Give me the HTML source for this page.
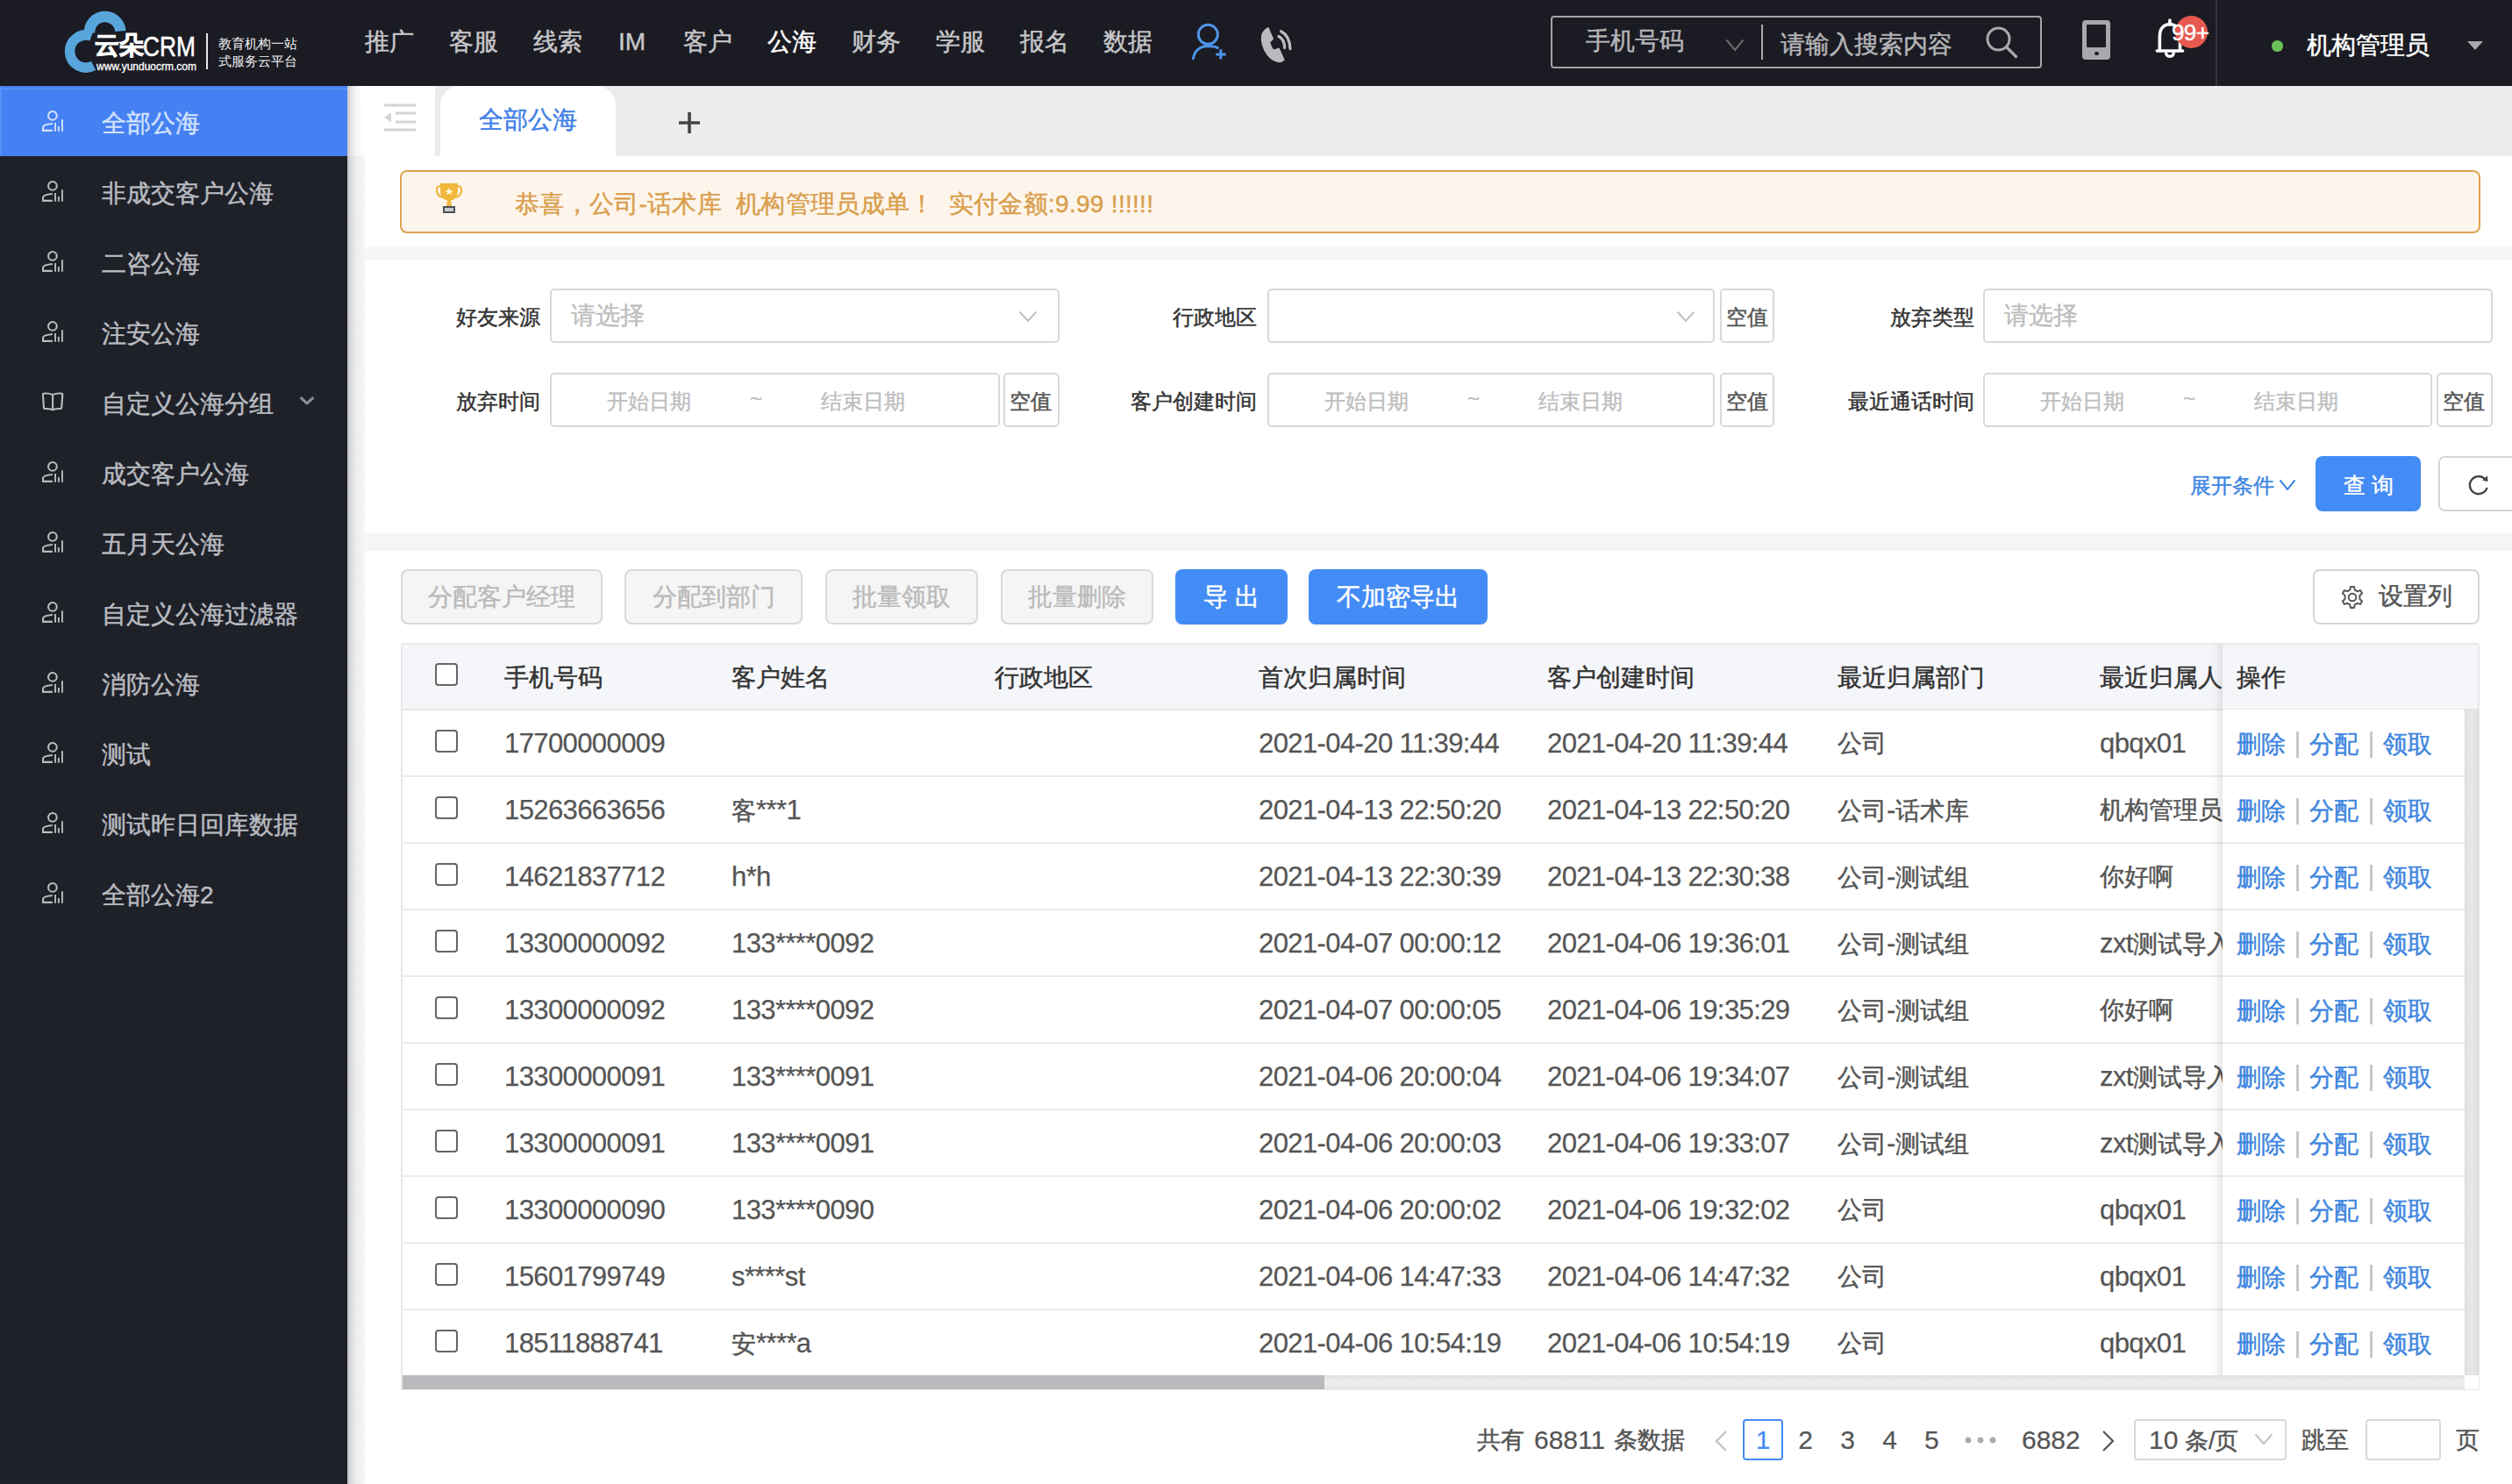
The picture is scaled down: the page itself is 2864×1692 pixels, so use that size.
<!DOCTYPE html>
<html><head><meta charset="utf-8">
<style>
*{box-sizing:border-box;margin:0;padding:0}
html,body{width:2864px;height:1692px;overflow:hidden}
body{position:relative;background:#f5f5f5;font-family:"Liberation Sans",sans-serif;color:#333;-webkit-text-stroke:0.45px currentColor}
.a{position:absolute}
#hdr{left:0;top:0;width:2864px;height:98px;background:#1b1b23}
#side{left:0;top:98px;width:396px;height:1594px;background:#1f2129}
.nav{position:absolute;top:24px;font-size:28px;line-height:48px;color:#c6c6c8;white-space:nowrap}
.si{position:absolute;left:0;width:396px;height:80px;color:#b9bbc0;font-size:28px}
.si .t{position:absolute;left:116px;top:23px;line-height:40px;white-space:nowrap}
.si svg{position:absolute;left:47px;top:27px}
.si.act{background:#4681f3;color:#d3e2fc}
.inp{border:2px solid #d9d9d9;border-radius:5px;background:#fff}
.lbl{font-size:24px;line-height:44px;color:#333;white-space:nowrap}
.ph{font-size:28px;line-height:40px;color:#bfbfbf;white-space:nowrap}
.dph{font-size:24px;line-height:44px;color:#bfbfbf;white-space:nowrap}
.kz{font-size:24px;line-height:44px;color:#555;white-space:nowrap}
.btnb{background:#448cf5;color:#fff;border-radius:8px;font-size:28px;display:flex;align-items:center;justify-content:center;white-space:nowrap;box-shadow:0 2px 2px rgba(0,0,0,0.04)}
.btnd{background:#f5f5f5;color:#bbb;border:2px solid #d9d9d9;border-radius:8px;font-size:28px;display:flex;align-items:center;justify-content:center;white-space:nowrap}
.cb{width:26px;height:26px;border:2px solid #666;border-radius:4px;background:#fff}
.th{font-size:28px;line-height:44px;color:#333;white-space:nowrap}
.td{font-size:28px;line-height:43px;color:#555;white-space:nowrap}
.td .n{font-size:31px;letter-spacing:-0.6px;position:relative;top:0;-webkit-text-stroke:0.25px currentColor}
.lk{font-size:28px;line-height:44px;color:#3f86e0;white-space:nowrap}
.sep{width:3px;height:30px;background:#c8c8c8}
.pg{font-size:27px;line-height:40px;color:#555;white-space:nowrap}
.n2{font-size:30px;-webkit-text-stroke:0.2px currentColor}
</style></head><body>
<!-- HEADER -->
<div id="hdr" class="a">
  <!-- logo -->
  <svg class="a" style="left:60px;top:0" width="100" height="98" viewBox="0 0 100 98">
    <path d="M46.6 74.9 A18.5 18.5 0 1 1 44.3 41.1" fill="none" stroke="#58a5dc" stroke-width="11.5"/>
    <path d="M42 38 A17.7 17.7 0 0 1 77.4 35.5" fill="none" stroke="#58a5dc" stroke-width="12.5"/>
  </svg>
  <div class="a" style="left:108px;top:36px;font-size:28px;font-weight:bold;color:#fff;line-height:32px;white-space:nowrap;-webkit-text-stroke:0.9px #fff">云朵</div>
  <div class="a" style="left:163px;top:34px;font-size:32px;color:#fff;line-height:38px;white-space:nowrap;transform:scaleX(0.82);transform-origin:0 0;-webkit-text-stroke:0.6px #fff">CRM</div>
  <div class="a" style="left:110px;top:68px;font-size:12px;color:#fff;line-height:16px;white-space:nowrap;-webkit-text-stroke:0.3px #fff">www.yunduocrm.com</div>
  <div class="a" style="left:235px;top:38px;width:2px;height:41px;background:#e8e8e8"></div>
  <div class="a" style="left:249px;top:40px;font-size:15px;color:#eee;line-height:19.5px;white-space:nowrap;-webkit-text-stroke:0">教育机构一站<br>式服务云平台</div>

  <div class="nav" style="left:416px">推广</div>
  <div class="nav" style="left:512px">客服</div>
  <div class="nav" style="left:608px">线索</div>
  <div class="nav" style="left:705px">IM</div>
  <div class="nav" style="left:779px">客户</div>
  <div class="nav" style="left:875px;color:#fff">公海</div>
  <div class="nav" style="left:971px">财务</div>
  <div class="nav" style="left:1067px">学服</div>
  <div class="nav" style="left:1163px">报名</div>
  <div class="nav" style="left:1258px">数据</div>
  <!-- user add icon -->
  <svg class="a" style="left:1355px;top:24px" width="48" height="48" viewBox="0 0 48 48"><circle cx="22.3" cy="15.3" r="11" fill="none" stroke="#4f94eb" stroke-width="3"/><path d="M5.4 42.7 Q8 29 22 28.5 Q30 28.6 33.4 30.6" fill="none" stroke="#4f94eb" stroke-width="3" stroke-linecap="round"/><path d="M36.9 32.2 V43.6 M31.2 37.9 H42.6" stroke="#4f94eb" stroke-width="3"/></svg>
  <!-- phone icon -->
  <svg class="a" style="left:1430px;top:24px" width="50" height="50" viewBox="0 0 50 50"><path d="M16.4 7 L22.1 20.4 L18.3 24.2 Q19.5 29 22.1 32.5 L28.5 30.6 L34.8 44.6 Q31 48 26.6 47.1 Q17 44.5 11.5 34 Q6.5 24 8.3 15.5 Q10.5 9 16.4 7 Z" fill="#b9babf"/><path d="M28 17.5 Q34.5 21 34.6 30.4" fill="none" stroke="#b9babf" stroke-width="3.3" stroke-linecap="round"/><path d="M30.6 11.8 Q40.5 17 41 31.6" fill="none" stroke="#b9babf" stroke-width="3.3" stroke-linecap="round"/></svg>
  <!-- search -->
  <div class="a" style="left:1768px;top:18px;width:560px;height:60px;border:2px solid #a4a5aa;border-radius:4px"></div>
  <div class="a" style="left:1808px;top:27px;font-size:28px;line-height:40px;color:#b4b4b7;white-space:nowrap">手机号码</div>
  <svg class="a" style="left:1967px;top:44px" width="22" height="15" viewBox="0 0 22 15"><path d="M1.5 1.5 L11 13 L20.5 1.5" fill="none" stroke="#6d6e74" stroke-width="2"/></svg>
  <div class="a" style="left:2008px;top:28px;width:2px;height:40px;background:#a9aaaf"></div>
  <div class="a" style="left:2030px;top:31px;font-size:28px;line-height:40px;color:#b4b4b7;white-space:nowrap">请输入搜索内容</div>
  <svg class="a" style="left:2263px;top:29px" width="40" height="40" viewBox="0 0 40 40"><circle cx="15.5" cy="15.5" r="12.5" fill="none" stroke="#a9aaaf" stroke-width="3"/><path d="M24.5 24.5 L36.5 36.5" stroke="#a9aaaf" stroke-width="3.2"/></svg>
  <!-- tablet -->
  <div class="a" style="left:2374px;top:23px;width:32px;height:45px;background:#a7a8ad;border-radius:4px"></div>
  <div class="a" style="left:2379px;top:28px;width:22px;height:26px;background:#1b1b23;border-radius:1px"></div>
  <div class="a" style="left:2388px;top:58.5px;width:4.5px;height:4.5px;background:#1b1b23;border-radius:50%"></div>
  <!-- bell -->
  <svg class="a" style="left:2455px;top:20px" width="40" height="48" viewBox="0 0 40 48"><path d="M4.3 38 H33.5" stroke="#fff" stroke-width="3.6" stroke-linecap="round"/><path d="M7.3 38 V22 Q7.3 8.5 18.9 7.5 Q30.5 8.5 30.5 22 V38" fill="none" stroke="#fff" stroke-width="3.6"/><path d="M18.9 3 V8" stroke="#fff" stroke-width="3.6" stroke-linecap="round"/><path d="M14.5 39.5 Q14.5 44.3 18.9 44.3 Q23.3 44.3 23.3 39.5" fill="none" stroke="#fff" stroke-width="3.4"/></svg>
  <div class="a" style="left:2480px;top:18px;width:37px;height:37px;background:#e8584f;border-radius:50%"></div>
  <div class="a" style="left:2476px;top:20px;font-size:26px;line-height:34px;color:#fff;white-space:nowrap;letter-spacing:-0.6px">99+</div>
  <div class="a" style="left:2526px;top:0;width:2px;height:98px;background:#34353d"></div>
  <div class="a" style="left:2590px;top:46px;width:12.5px;height:12.5px;background:#6cc15a;border-radius:50%"></div>
  <div class="a" style="left:2630px;top:32px;font-size:28px;line-height:40px;color:#fff;white-space:nowrap;font-weight:500">机构管理员</div>
  <svg class="a" style="left:2813px;top:47px" width="18" height="10" viewBox="0 0 18 10"><path d="M0 0 H18 L9 10 Z" fill="#a8a9ae"/></svg>
</div>

<!-- SIDEBAR -->
<div id="side" class="a">
<div class="si act" style="top:0px"><div style="position:absolute;left:0;top:2px;width:396px;height:2px;background:#5590f6"></div><div style="position:absolute;left:0;top:0;width:2px;height:80px;background:#4f93f8"></div><svg width="28" height="28" viewBox="0 0 28 28" fill="none" stroke="currentColor" stroke-width="2.1"><circle cx="12.9" cy="6.9" r="4.85"/><path d="M12.9 16 C7 16.5 2.05 17.5 2.05 20 V23.9 H12.9"/><path d="M16 15.1 V24.8 M19.9 19.1 V24.8 M23.95 11.2 V24.8" stroke-width="1.9"/></svg><div class="t">全部公海</div></div>
<div class="si" style="top:80px"><svg width="28" height="28" viewBox="0 0 28 28" fill="none" stroke="currentColor" stroke-width="2.1"><circle cx="12.9" cy="6.9" r="4.85"/><path d="M12.9 16 C7 16.5 2.05 17.5 2.05 20 V23.9 H12.9"/><path d="M16 15.1 V24.8 M19.9 19.1 V24.8 M23.95 11.2 V24.8" stroke-width="1.9"/></svg><div class="t">非成交客户公海</div></div>
<div class="si" style="top:160px"><svg width="28" height="28" viewBox="0 0 28 28" fill="none" stroke="currentColor" stroke-width="2.1"><circle cx="12.9" cy="6.9" r="4.85"/><path d="M12.9 16 C7 16.5 2.05 17.5 2.05 20 V23.9 H12.9"/><path d="M16 15.1 V24.8 M19.9 19.1 V24.8 M23.95 11.2 V24.8" stroke-width="1.9"/></svg><div class="t">二咨公海</div></div>
<div class="si" style="top:240px"><svg width="28" height="28" viewBox="0 0 28 28" fill="none" stroke="currentColor" stroke-width="2.1"><circle cx="12.9" cy="6.9" r="4.85"/><path d="M12.9 16 C7 16.5 2.05 17.5 2.05 20 V23.9 H12.9"/><path d="M16 15.1 V24.8 M19.9 19.1 V24.8 M23.95 11.2 V24.8" stroke-width="1.9"/></svg><div class="t">注安公海</div></div>
<div class="si" style="top:320px"><svg width="28" height="28" viewBox="0 0 28 28" fill="none" stroke="currentColor" stroke-width="2.1" stroke-linejoin="round"><path d="M13.1 5 Q8 3 2.6 3.7 Q1.9 3.8 1.9 4.6 L3 20 Q3.1 21 4 21 Q9 20.8 13.1 22.2 Q17.2 20.8 22.2 21 Q23.1 21 23.2 20 L24.3 4.6 Q24.3 3.8 23.6 3.7 Q18.2 3 13.1 5 Z M13.1 5 V22.2"/></svg><div class="t">自定义公海分组</div><svg class="chev" width="20" height="14" viewBox="0 0 20 14" style="position:absolute;left:339px;top:33px"><path d="M4.6 3 L10.9 8.9 L17.5 3" fill="none" stroke="#8b8d94" stroke-width="3.1" stroke-linecap="round" stroke-linejoin="round"/></svg></div>
<div class="si" style="top:400px"><svg width="28" height="28" viewBox="0 0 28 28" fill="none" stroke="currentColor" stroke-width="2.1"><circle cx="12.9" cy="6.9" r="4.85"/><path d="M12.9 16 C7 16.5 2.05 17.5 2.05 20 V23.9 H12.9"/><path d="M16 15.1 V24.8 M19.9 19.1 V24.8 M23.95 11.2 V24.8" stroke-width="1.9"/></svg><div class="t">成交客户公海</div></div>
<div class="si" style="top:480px"><svg width="28" height="28" viewBox="0 0 28 28" fill="none" stroke="currentColor" stroke-width="2.1"><circle cx="12.9" cy="6.9" r="4.85"/><path d="M12.9 16 C7 16.5 2.05 17.5 2.05 20 V23.9 H12.9"/><path d="M16 15.1 V24.8 M19.9 19.1 V24.8 M23.95 11.2 V24.8" stroke-width="1.9"/></svg><div class="t">五月天公海</div></div>
<div class="si" style="top:560px"><svg width="28" height="28" viewBox="0 0 28 28" fill="none" stroke="currentColor" stroke-width="2.1"><circle cx="12.9" cy="6.9" r="4.85"/><path d="M12.9 16 C7 16.5 2.05 17.5 2.05 20 V23.9 H12.9"/><path d="M16 15.1 V24.8 M19.9 19.1 V24.8 M23.95 11.2 V24.8" stroke-width="1.9"/></svg><div class="t">自定义公海过滤器</div></div>
<div class="si" style="top:640px"><svg width="28" height="28" viewBox="0 0 28 28" fill="none" stroke="currentColor" stroke-width="2.1"><circle cx="12.9" cy="6.9" r="4.85"/><path d="M12.9 16 C7 16.5 2.05 17.5 2.05 20 V23.9 H12.9"/><path d="M16 15.1 V24.8 M19.9 19.1 V24.8 M23.95 11.2 V24.8" stroke-width="1.9"/></svg><div class="t">消防公海</div></div>
<div class="si" style="top:720px"><svg width="28" height="28" viewBox="0 0 28 28" fill="none" stroke="currentColor" stroke-width="2.1"><circle cx="12.9" cy="6.9" r="4.85"/><path d="M12.9 16 C7 16.5 2.05 17.5 2.05 20 V23.9 H12.9"/><path d="M16 15.1 V24.8 M19.9 19.1 V24.8 M23.95 11.2 V24.8" stroke-width="1.9"/></svg><div class="t">测试</div></div>
<div class="si" style="top:800px"><svg width="28" height="28" viewBox="0 0 28 28" fill="none" stroke="currentColor" stroke-width="2.1"><circle cx="12.9" cy="6.9" r="4.85"/><path d="M12.9 16 C7 16.5 2.05 17.5 2.05 20 V23.9 H12.9"/><path d="M16 15.1 V24.8 M19.9 19.1 V24.8 M23.95 11.2 V24.8" stroke-width="1.9"/></svg><div class="t">测试昨日回库数据</div></div>
<div class="si" style="top:880px"><svg width="28" height="28" viewBox="0 0 28 28" fill="none" stroke="currentColor" stroke-width="2.1"><circle cx="12.9" cy="6.9" r="4.85"/><path d="M12.9 16 C7 16.5 2.05 17.5 2.05 20 V23.9 H12.9"/><path d="M16 15.1 V24.8 M19.9 19.1 V24.8 M23.95 11.2 V24.8" stroke-width="1.9"/></svg><div class="t">全部公海2</div></div>
</div>

<!-- CONTENT -->
<div class="a" style="left:396px;top:98px;width:100px;height:80px;background:#fff"></div>
<div class="a" style="left:496px;top:98px;width:2368px;height:80px;background:#ececec"></div>
<div class="a" style="left:502px;top:98px;width:200px;height:82px;background:#fff;border-radius:22px 22px 0 0"></div>
<div class="a" style="left:546px;top:117px;font-size:28px;line-height:40px;color:#4080e8;white-space:nowrap">全部公海</div>
<svg class="a" style="left:438px;top:118px" width="36" height="32" viewBox="0 0 36 32"><path d="M0 2 H36 M13 11 H36 M13 21 H36 M0 30 H36" stroke="#d4d4d4" stroke-width="3.2"/><path d="M0 16 L8 10.5 V21.5 Z" fill="#d4d4d4"/></svg>
<svg class="a" style="left:774px;top:128px" width="24" height="24" viewBox="0 0 24 24"><path d="M12 0 V24 M0 12 H24" stroke="#444" stroke-width="3.6"/></svg>
<!-- white panel 1 -->
<div class="a" style="left:416px;top:178px;width:2448px;height:104px;background:#fff"></div>
<div class="a" style="left:456px;top:194px;width:2372px;height:72px;background:#fdf5eb;border:2px solid #dea352;border-radius:8px"></div>
<div class="a" style="left:587px;top:213px;font-size:28px;line-height:40px;color:#d99f4e;white-space:nowrap;letter-spacing:0.3px">恭喜，公司-话术库&nbsp;&nbsp;机构管理员成单！&nbsp;&nbsp;实付金额:9.99 !!!!!!</div>
<svg class="a" style="left:496px;top:208px" width="32" height="36" viewBox="0 0 32 36"><path d="M7 4 Q1 4 2 10 Q3 16 9 17" fill="none" stroke="#f0b53c" stroke-width="2.2"/><path d="M25 4 Q31 4 30 10 Q29 16 23 17" fill="none" stroke="#f0b53c" stroke-width="2.2"/><path d="M6 1 H26 V10 Q26 20 16 21 Q6 20 6 10 Z" fill="#f2b83e"/><path d="M14 20 H18 L19 27 H13 Z" fill="#f2b83e"/><rect x="9" y="27" width="14" height="8" fill="#4a4f55"/><rect x="11" y="29" width="10" height="4" fill="#c9cdd2"/><path d="M16 6 L17.3 9 L20.5 9.2 L18 11.2 L18.8 14.3 L16 12.6 L13.2 14.3 L14 11.2 L11.5 9.2 L14.7 9 Z" fill="#fff7d9"/></svg>
<!-- filter panel -->
<div class="a" style="left:416px;top:296px;width:2448px;height:312px;background:#fff"></div>
<!-- table panel -->
<div class="a" style="left:416px;top:628px;width:2448px;height:1064px;background:#fff"></div>
<div class="a lbl" style="right:2248px;top:340px">好友来源</div>
<div class="a inp" style="left:627px;top:329px;width:581px;height:62px;"></div>
<div class="a ph" style="left:651px;top:340px">请选择</div>
<svg class="a" style="left:1161px;top:354px" width="22" height="14" viewBox="0 0 22 14"><path d="M1.5 1.5 L11 12 L20.5 1.5" fill="none" stroke="#c0c0c0" stroke-width="2"/></svg>
<div class="a lbl" style="right:2248px;top:436px">放弃时间</div>
<div class="a inp" style="left:627px;top:425px;width:513px;height:62px;"></div>
<div class="a inp" style="left:1144px;top:425px;width:64px;height:62px;"></div>
<div class="a dph" style="left:692px;top:436px">开始日期</div><div class="a dph" style="left:855px;top:433px">~</div><div class="a dph" style="left:936px;top:436px">结束日期</div><div class="a kz" style="left:1151px;top:436px">空值</div>
<div class="a lbl" style="right:1431px;top:340px">行政地区</div>
<div class="a inp" style="left:1445px;top:329px;width:510px;height:62px;"></div>
<div class="a inp" style="left:1961px;top:329px;width:62px;height:62px;"></div>
<svg class="a" style="left:1911px;top:354px" width="22" height="14" viewBox="0 0 22 14"><path d="M1.5 1.5 L11 12 L20.5 1.5" fill="none" stroke="#c0c0c0" stroke-width="2"/></svg>
<div class="a kz" style="left:1968px;top:340px">空值</div>
<div class="a lbl" style="right:1431px;top:436px">客户创建时间</div>
<div class="a inp" style="left:1445px;top:425px;width:510px;height:62px;"></div>
<div class="a inp" style="left:1961px;top:425px;width:62px;height:62px;"></div>
<div class="a dph" style="left:1510px;top:436px">开始日期</div><div class="a dph" style="left:1673px;top:433px">~</div><div class="a dph" style="left:1754px;top:436px">结束日期</div><div class="a kz" style="left:1968px;top:436px">空值</div>
<div class="a lbl" style="right:613px;top:340px">放弃类型</div>
<div class="a inp" style="left:2261px;top:329px;width:581px;height:62px;"></div>
<div class="a ph" style="left:2285px;top:340px">请选择</div>
<div class="a lbl" style="right:613px;top:436px">最近通话时间</div>
<div class="a inp" style="left:2261px;top:425px;width:512px;height:62px;"></div>
<div class="a inp" style="left:2778px;top:425px;width:64px;height:62px;"></div>
<div class="a dph" style="left:2326px;top:436px">开始日期</div><div class="a dph" style="left:2489px;top:433px">~</div><div class="a dph" style="left:2570px;top:436px">结束日期</div><div class="a kz" style="left:2785px;top:436px">空值</div>
<div class="a" style="left:2497px;top:534px;font-size:24px;line-height:40px;color:#3f86e4;white-space:nowrap">展开条件</div>
<svg class="a" style="left:2598px;top:546px" width="20" height="14" viewBox="0 0 20 14"><path d="M1.5 1.5 L10 12 L18.5 1.5" fill="none" stroke="#3f86e4" stroke-width="2"/></svg>
<div class="a btnb" style="left:2640px;top:520px;width:120px;height:63px;font-size:25px;letter-spacing:7px;padding-left:7px;padding-top:3px">查询</div>
<div class="a" style="left:2780px;top:520px;width:120px;height:63px;border:2px solid #d6d6d6;border-radius:7px;background:#fff"></div>
<svg class="a" style="left:2813px;top:540px" width="26" height="26" viewBox="0 0 26 26"><path d="M21.5 8 A10 10 0 1 0 22.5 16" fill="none" stroke="#444" stroke-width="2.4"/><path d="M17 7.5 L23.5 9 L23 2.5 Z" fill="#444"/></svg>
<div class="a btnd" style="left:457px;top:649px;width:230px;height:63px">分配客户经理</div>
<div class="a btnd" style="left:712px;top:649px;width:203px;height:63px">分配到部门</div>
<div class="a btnd" style="left:941px;top:649px;width:174px;height:63px">批量领取</div>
<div class="a btnd" style="left:1141px;top:649px;width:174px;height:63px">批量删除</div>
<div class="a btnb" style="left:1340px;top:649px;width:128px;height:63px;letter-spacing:8px;padding-left:8px">导出</div>
<div class="a btnb" style="left:1492px;top:649px;width:204px;height:63px">不加密导出</div>
<div class="a" style="left:2637px;top:649px;width:190px;height:63px;border:2px solid #d6d6d6;border-radius:8px;background:#fff"></div>
<svg class="a" style="left:2668px;top:667px" width="28" height="28" viewBox="0 0 28 28"><path fill="none" stroke="#555" stroke-width="2" stroke-linejoin="round" d="M12 2 H16 L16.8 5.6 L19.6 7.2 L23.1 6.1 L25.1 9.6 L22.4 12.1 V15.9 L25.1 18.4 L23.1 21.9 L19.6 20.8 L16.8 22.4 L16 26 H12 L11.2 22.4 L8.4 20.8 L4.9 21.9 L2.9 18.4 L5.6 15.9 V12.1 L2.9 9.6 L4.9 6.1 L8.4 7.2 L11.2 5.6 Z"/><circle cx="14" cy="14" r="4.3" fill="none" stroke="#555" stroke-width="2"/></svg>
<div class="a" style="left:2712px;top:660px;font-size:28px;line-height:40px;color:#555;white-space:nowrap">设置列</div>
<div class="a" style="left:457px;top:733px;width:2370px;height:852px;border:2px solid #e8e8e8;border-radius:4px 4px 0 0;background:#fff"></div>
<div class="a" style="left:459px;top:735px;width:2366px;height:75px;background:#f5f6fa;border-bottom:2px solid #e6e6e6"></div>
<div class="a cb" style="left:496px;top:756px"></div>
<div class="a th" style="left:575px;top:751px">手机号码</div>
<div class="a th" style="left:834px;top:751px">客户姓名</div>
<div class="a th" style="left:1134px;top:751px">行政地区</div>
<div class="a th" style="left:1435px;top:751px">首次归属时间</div>
<div class="a th" style="left:1764px;top:751px">客户创建时间</div>
<div class="a th" style="left:2095px;top:751px">最近归属部门</div>
<div class="a th" style="left:2394px;top:751px">最近归属人</div>
<div class="a" style="left:459px;top:884px;width:2351px;height:2px;background:#ebebeb"></div>
<div class="a cb" style="left:496px;top:832px"></div>
<div class="a td" style="left:575px;top:826px"><span class="n">17700000009</span></div>
<div class="a td" style="left:1435px;top:826px"><span class="n">2021-04-20 11:39:44</span></div>
<div class="a td" style="left:1764px;top:826px"><span class="n">2021-04-20 11:39:44</span></div>
<div class="a td" style="left:2095px;top:826px">公司</div>
<div class="a td" style="left:2394px;top:826px"><span class="n">qbqx01</span></div>
<div class="a" style="left:459px;top:960px;width:2351px;height:2px;background:#ebebeb"></div>
<div class="a cb" style="left:496px;top:908px"></div>
<div class="a td" style="left:575px;top:902px"><span class="n">15263663656</span></div>
<div class="a td" style="left:834px;top:902px">客<span class="n">***1</span></div>
<div class="a td" style="left:1435px;top:902px"><span class="n">2021-04-13 22:50:20</span></div>
<div class="a td" style="left:1764px;top:902px"><span class="n">2021-04-13 22:50:20</span></div>
<div class="a td" style="left:2095px;top:902px">公司<span class="n">-</span>话术库</div>
<div class="a td" style="left:2394px;top:902px">机构管理员</div>
<div class="a" style="left:459px;top:1036px;width:2351px;height:2px;background:#ebebeb"></div>
<div class="a cb" style="left:496px;top:984px"></div>
<div class="a td" style="left:575px;top:978px"><span class="n">14621837712</span></div>
<div class="a td" style="left:834px;top:978px"><span class="n">h*h</span></div>
<div class="a td" style="left:1435px;top:978px"><span class="n">2021-04-13 22:30:39</span></div>
<div class="a td" style="left:1764px;top:978px"><span class="n">2021-04-13 22:30:38</span></div>
<div class="a td" style="left:2095px;top:978px">公司<span class="n">-</span>测试组</div>
<div class="a td" style="left:2394px;top:978px">你好啊</div>
<div class="a" style="left:459px;top:1112px;width:2351px;height:2px;background:#ebebeb"></div>
<div class="a cb" style="left:496px;top:1060px"></div>
<div class="a td" style="left:575px;top:1054px"><span class="n">13300000092</span></div>
<div class="a td" style="left:834px;top:1054px"><span class="n">133****0092</span></div>
<div class="a td" style="left:1435px;top:1054px"><span class="n">2021-04-07 00:00:12</span></div>
<div class="a td" style="left:1764px;top:1054px"><span class="n">2021-04-06 19:36:01</span></div>
<div class="a td" style="left:2095px;top:1054px">公司<span class="n">-</span>测试组</div>
<div class="a td" style="left:2394px;top:1054px"><span class="n">zxt</span>测试导入</div>
<div class="a" style="left:459px;top:1188px;width:2351px;height:2px;background:#ebebeb"></div>
<div class="a cb" style="left:496px;top:1136px"></div>
<div class="a td" style="left:575px;top:1130px"><span class="n">13300000092</span></div>
<div class="a td" style="left:834px;top:1130px"><span class="n">133****0092</span></div>
<div class="a td" style="left:1435px;top:1130px"><span class="n">2021-04-07 00:00:05</span></div>
<div class="a td" style="left:1764px;top:1130px"><span class="n">2021-04-06 19:35:29</span></div>
<div class="a td" style="left:2095px;top:1130px">公司<span class="n">-</span>测试组</div>
<div class="a td" style="left:2394px;top:1130px">你好啊</div>
<div class="a" style="left:459px;top:1264px;width:2351px;height:2px;background:#ebebeb"></div>
<div class="a cb" style="left:496px;top:1212px"></div>
<div class="a td" style="left:575px;top:1206px"><span class="n">13300000091</span></div>
<div class="a td" style="left:834px;top:1206px"><span class="n">133****0091</span></div>
<div class="a td" style="left:1435px;top:1206px"><span class="n">2021-04-06 20:00:04</span></div>
<div class="a td" style="left:1764px;top:1206px"><span class="n">2021-04-06 19:34:07</span></div>
<div class="a td" style="left:2095px;top:1206px">公司<span class="n">-</span>测试组</div>
<div class="a td" style="left:2394px;top:1206px"><span class="n">zxt</span>测试导入</div>
<div class="a" style="left:459px;top:1340px;width:2351px;height:2px;background:#ebebeb"></div>
<div class="a cb" style="left:496px;top:1288px"></div>
<div class="a td" style="left:575px;top:1282px"><span class="n">13300000091</span></div>
<div class="a td" style="left:834px;top:1282px"><span class="n">133****0091</span></div>
<div class="a td" style="left:1435px;top:1282px"><span class="n">2021-04-06 20:00:03</span></div>
<div class="a td" style="left:1764px;top:1282px"><span class="n">2021-04-06 19:33:07</span></div>
<div class="a td" style="left:2095px;top:1282px">公司<span class="n">-</span>测试组</div>
<div class="a td" style="left:2394px;top:1282px"><span class="n">zxt</span>测试导入</div>
<div class="a" style="left:459px;top:1416px;width:2351px;height:2px;background:#ebebeb"></div>
<div class="a cb" style="left:496px;top:1364px"></div>
<div class="a td" style="left:575px;top:1358px"><span class="n">13300000090</span></div>
<div class="a td" style="left:834px;top:1358px"><span class="n">133****0090</span></div>
<div class="a td" style="left:1435px;top:1358px"><span class="n">2021-04-06 20:00:02</span></div>
<div class="a td" style="left:1764px;top:1358px"><span class="n">2021-04-06 19:32:02</span></div>
<div class="a td" style="left:2095px;top:1358px">公司</div>
<div class="a td" style="left:2394px;top:1358px"><span class="n">qbqx01</span></div>
<div class="a" style="left:459px;top:1492px;width:2351px;height:2px;background:#ebebeb"></div>
<div class="a cb" style="left:496px;top:1440px"></div>
<div class="a td" style="left:575px;top:1434px"><span class="n">15601799749</span></div>
<div class="a td" style="left:834px;top:1434px"><span class="n">s****st</span></div>
<div class="a td" style="left:1435px;top:1434px"><span class="n">2021-04-06 14:47:33</span></div>
<div class="a td" style="left:1764px;top:1434px"><span class="n">2021-04-06 14:47:32</span></div>
<div class="a td" style="left:2095px;top:1434px">公司</div>
<div class="a td" style="left:2394px;top:1434px"><span class="n">qbqx01</span></div>
<div class="a" style="left:459px;top:1568px;width:2351px;height:2px;background:#ebebeb"></div>
<div class="a cb" style="left:496px;top:1516px"></div>
<div class="a td" style="left:575px;top:1510px"><span class="n">18511888741</span></div>
<div class="a td" style="left:834px;top:1510px">安<span class="n">****a</span></div>
<div class="a td" style="left:1435px;top:1510px"><span class="n">2021-04-06 10:54:19</span></div>
<div class="a td" style="left:1764px;top:1510px"><span class="n">2021-04-06 10:54:19</span></div>
<div class="a td" style="left:2095px;top:1510px">公司</div>
<div class="a td" style="left:2394px;top:1510px"><span class="n">qbqx01</span></div>
<div class="a" style="left:2520px;top:735px;width:14px;height:833px;background:linear-gradient(to right,rgba(0,0,0,0),rgba(0,0,0,0.03) 50%,rgba(0,0,0,0.09))"></div>
<div class="a" style="left:2534px;top:735px;width:291px;height:75px;background:#f5f6fa;border-bottom:2px solid #e6e6e6"></div>
<div class="a th" style="left:2550px;top:751px">操作</div>
<div class="a" style="left:2534px;top:809px;width:276px;height:759px;background:#fff"></div>
<div class="a" style="left:2534px;top:884px;width:276px;height:2px;background:#ebebeb"></div>
<div class="a lk" style="left:2550px;top:827px">删除</div><div class="a sep" style="left:2618px;top:834px"></div><div class="a lk" style="left:2633px;top:827px">分配</div><div class="a sep" style="left:2702px;top:834px"></div><div class="a lk" style="left:2717px;top:827px">领取</div>
<div class="a" style="left:2534px;top:960px;width:276px;height:2px;background:#ebebeb"></div>
<div class="a lk" style="left:2550px;top:903px">删除</div><div class="a sep" style="left:2618px;top:910px"></div><div class="a lk" style="left:2633px;top:903px">分配</div><div class="a sep" style="left:2702px;top:910px"></div><div class="a lk" style="left:2717px;top:903px">领取</div>
<div class="a" style="left:2534px;top:1036px;width:276px;height:2px;background:#ebebeb"></div>
<div class="a lk" style="left:2550px;top:979px">删除</div><div class="a sep" style="left:2618px;top:986px"></div><div class="a lk" style="left:2633px;top:979px">分配</div><div class="a sep" style="left:2702px;top:986px"></div><div class="a lk" style="left:2717px;top:979px">领取</div>
<div class="a" style="left:2534px;top:1112px;width:276px;height:2px;background:#ebebeb"></div>
<div class="a lk" style="left:2550px;top:1055px">删除</div><div class="a sep" style="left:2618px;top:1062px"></div><div class="a lk" style="left:2633px;top:1055px">分配</div><div class="a sep" style="left:2702px;top:1062px"></div><div class="a lk" style="left:2717px;top:1055px">领取</div>
<div class="a" style="left:2534px;top:1188px;width:276px;height:2px;background:#ebebeb"></div>
<div class="a lk" style="left:2550px;top:1131px">删除</div><div class="a sep" style="left:2618px;top:1138px"></div><div class="a lk" style="left:2633px;top:1131px">分配</div><div class="a sep" style="left:2702px;top:1138px"></div><div class="a lk" style="left:2717px;top:1131px">领取</div>
<div class="a" style="left:2534px;top:1264px;width:276px;height:2px;background:#ebebeb"></div>
<div class="a lk" style="left:2550px;top:1207px">删除</div><div class="a sep" style="left:2618px;top:1214px"></div><div class="a lk" style="left:2633px;top:1207px">分配</div><div class="a sep" style="left:2702px;top:1214px"></div><div class="a lk" style="left:2717px;top:1207px">领取</div>
<div class="a" style="left:2534px;top:1340px;width:276px;height:2px;background:#ebebeb"></div>
<div class="a lk" style="left:2550px;top:1283px">删除</div><div class="a sep" style="left:2618px;top:1290px"></div><div class="a lk" style="left:2633px;top:1283px">分配</div><div class="a sep" style="left:2702px;top:1290px"></div><div class="a lk" style="left:2717px;top:1283px">领取</div>
<div class="a" style="left:2534px;top:1416px;width:276px;height:2px;background:#ebebeb"></div>
<div class="a lk" style="left:2550px;top:1359px">删除</div><div class="a sep" style="left:2618px;top:1366px"></div><div class="a lk" style="left:2633px;top:1359px">分配</div><div class="a sep" style="left:2702px;top:1366px"></div><div class="a lk" style="left:2717px;top:1359px">领取</div>
<div class="a" style="left:2534px;top:1492px;width:276px;height:2px;background:#ebebeb"></div>
<div class="a lk" style="left:2550px;top:1435px">删除</div><div class="a sep" style="left:2618px;top:1442px"></div><div class="a lk" style="left:2633px;top:1435px">分配</div><div class="a sep" style="left:2702px;top:1442px"></div><div class="a lk" style="left:2717px;top:1435px">领取</div>
<div class="a" style="left:2534px;top:1568px;width:276px;height:2px;background:#ebebeb"></div>
<div class="a lk" style="left:2550px;top:1511px">删除</div><div class="a sep" style="left:2618px;top:1518px"></div><div class="a lk" style="left:2633px;top:1511px">分配</div><div class="a sep" style="left:2702px;top:1518px"></div><div class="a lk" style="left:2717px;top:1511px">领取</div>
<div class="a" style="left:2810px;top:809px;width:16px;height:759px;background:linear-gradient(to right,#dcdcdc,#e6e6e6 30%,#e6e6e6 70%,#dcdcdc)"></div>
<div class="a" style="left:459px;top:1568px;width:2351px;height:16px;background:linear-gradient(#e2e2e2,#ececec 40%,#ececec 70%,#e2e2e2)"></div>
<div class="a" style="left:459px;top:1568px;width:1051px;height:16px;background:#b9babd"></div>
<div class="a" style="left:2810px;top:1568px;width:16px;height:16px;background:#fff"></div>
<div class="a pg" style="left:1684px;top:1622px">共有</div>
<div class="a pg n2" style="left:1749px;top:1622px">68811</div>
<div class="a pg" style="left:1840px;top:1622px">条数据</div>
<svg class="a" style="left:1954px;top:1630px" width="16" height="26" viewBox="0 0 16 26"><path d="M14 2 L3 13 L14 24" fill="none" stroke="#c0c0c0" stroke-width="2.2"/></svg>
<div class="a" style="left:1987px;top:1618px;width:46px;height:47px;border:2px solid #448cf5;border-radius:4px"></div>
<div class="a pg n2" style="left:1970px;width:80px;text-align:center;top:1622px;color:#448cf5">1</div>
<div class="a pg n2" style="left:2018.6px;width:80px;text-align:center;top:1622px;color:#555">2</div>
<div class="a pg n2" style="left:2066.5px;width:80px;text-align:center;top:1622px;color:#555">3</div>
<div class="a pg n2" style="left:2114.5px;width:80px;text-align:center;top:1622px;color:#555">4</div>
<div class="a pg n2" style="left:2162.4px;width:80px;text-align:center;top:1622px;color:#555">5</div>
<div class="a" style="left:2240px;top:1638px;width:36px;height:8px;background:radial-gradient(circle at 4px 4px,#aaa 3.2px,transparent 3.8px) 0 0/14px 8px repeat-x"></div>
<div class="a pg n2" style="left:2305px;top:1622px">6882</div>
<svg class="a" style="left:2396px;top:1630px" width="16" height="26" viewBox="0 0 16 26"><path d="M2 2 L13 13 L2 24" fill="none" stroke="#555" stroke-width="2.2"/></svg>
<div class="a" style="left:2433px;top:1618px;width:174px;height:47px;border:2px solid #d9d9d9;border-radius:4px"></div>
<div class="a pg" style="left:2450px;top:1622px"><span class="n2">10</span> 条/页</div>
<svg class="a" style="left:2570px;top:1634px" width="22" height="14" viewBox="0 0 22 14"><path d="M1.5 1.5 L11 12 L20.5 1.5" fill="none" stroke="#c0c0c0" stroke-width="2"/></svg>
<div class="a pg" style="left:2624px;top:1622px">跳至</div>
<div class="a" style="left:2697px;top:1618px;width:86px;height:47px;border:2px solid #d9d9d9;border-radius:4px"></div>
<div class="a pg" style="left:2800px;top:1622px">页</div>
<!-- sidebar shadow -->
<div class="a" style="left:396px;top:98px;width:20px;height:1594px;background:linear-gradient(to right,rgba(25,30,45,0.26),rgba(25,30,45,0.12) 4px,rgba(25,30,45,0.04) 10px,rgba(25,30,45,0) 18px)"></div>

</body></html>
